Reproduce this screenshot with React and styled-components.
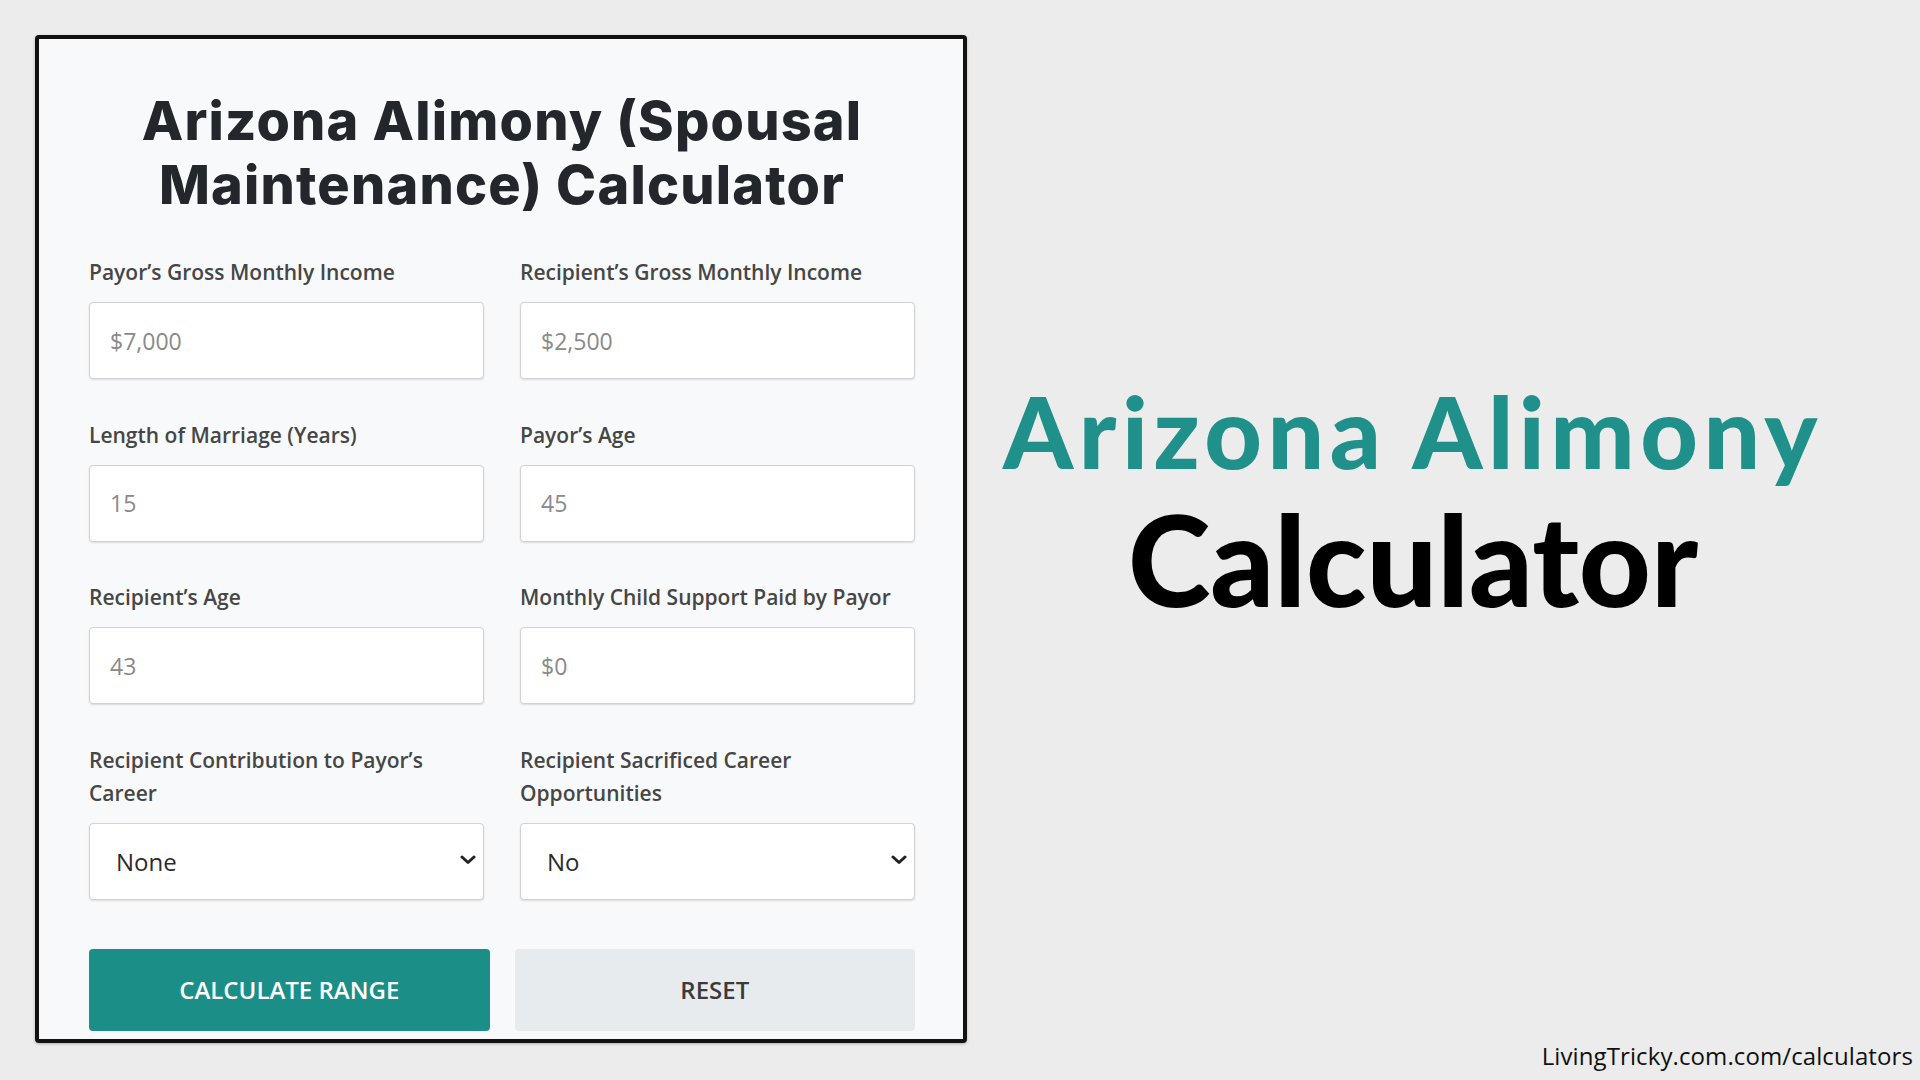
import React from "react";
import styled, { createGlobalStyle } from "styled-components";

const GlobalStyle = createGlobalStyle`
  html, body { margin: 0; padding: 0; }
  body { background: #ececec; font-family: "Open Sans", "Liberation Sans", sans-serif; }
  * { box-sizing: border-box; }
`;

const Page = styled.div`
  width: 1920px;
  height: 1080px;
  display: flex;
  padding: 35px 0 0 35px;
  overflow: hidden;
`;

const Card = styled.div`
  width: 932px;
  flex: none;
  align-self: flex-start;
  background: #f8f9fa;
  border: 4px solid #111;
  border-radius: 4px;
  padding: 50px 48px 8px 50px;
  box-shadow: 0 1px 3px rgba(0,0,0,0.25);
`;

const Title = styled.h1`
  margin: 0 0 39px;
  font-family: "Inter", "Liberation Sans", sans-serif;
  font-weight: 800;
  font-size: 54px;
  line-height: 64px;
  color: #23262b;
  text-align: center;
  letter-spacing: 1.2px;
`;

const FieldGrid = styled.div`
  display: grid;
  grid-template-columns: 1fr 1fr;
  column-gap: 36px;
  row-gap: 39.5px;
  align-items: end;
`;

const Field = styled.div`
  display: flex;
  flex-direction: column;
`;

const Label = styled.label`
  font-family: "Open Sans", "Liberation Sans", sans-serif;
  font-weight: 600;
  font-size: 21px;
  line-height: 33px;
  color: #464646;
  margin-bottom: 13px;
`;

const Input = styled.input`
  height: 77px;
  width: 100%;
  background: #fff;
  border: 1px solid #d2d2d2;
  border-radius: 4px;
  box-shadow: 0 1px 2px rgba(0,0,0,0.12);
  padding: 0 20px;
  font-family: "Open Sans", "Liberation Sans", sans-serif;
  font-size: 23px;
  color: #333;
  outline: none;
  &::placeholder { color: #8a8a8a; }
`;

const SelectWrap = styled.div`
  position: relative;
  height: 77px;
`;

const Select = styled.select`
  appearance: none;
  -webkit-appearance: none;
  height: 100%;
  width: 100%;
  background: #fff;
  border: 1px solid #d2d2d2;
  border-radius: 4px;
  box-shadow: 0 1px 2px rgba(0,0,0,0.12);
  padding: 0 20px 0 26px;
  font-family: "Open Sans", "Liberation Sans", sans-serif;
  font-size: 24px;
  color: #2b2b2b;
  outline: none;
`;

const Chevron = styled.svg`
  position: absolute;
  right: 8px;
  top: 50%;
  width: 16px;
  height: 10px;
  margin-top: -6px;
  pointer-events: none;
`;

const ButtonRow = styled.div`
  display: grid;
  grid-template-columns: 1fr 1fr;
  column-gap: 25px;
  margin-top: 49px;
`;

const Button = styled.button`
  height: 82px;
  border: none;
  border-radius: 4px;
  font-family: "Open Sans", "Liberation Sans", sans-serif;
  font-weight: 600;
  font-size: 24px;
  text-transform: uppercase;
  background: ${(p) => (p.$primary ? "#1b8f87" : "#e8ebee")};
  color: ${(p) => (p.$primary ? "#ffffff" : "#3a3a3a")};
  cursor: pointer;
`;

const Side = styled.div`
  flex: 1;
  display: flex;
  flex-direction: column;
  height: 1045px;
`;

const Hero = styled.div`
  display: flex;
  flex-direction: column;
  align-items: center;
  padding: 340px 61px 0 0;
  font-family: "Lato", "Liberation Sans", sans-serif;
  font-weight: 900;
`;

const HeroLine = styled.div`
  font-size: ${(p) => p.$size}px;
  line-height: ${(p) => p.$lh}px;
  letter-spacing: ${(p) => p.$ls || 0}px;
  margin-top: ${(p) => p.$mt || 0}px;
  color: ${(p) => p.$color};
  white-space: nowrap;
`;

const Footer = styled.div`
  margin-top: auto;
  align-self: flex-end;
  padding: 0 7px 12px 0;
  font-family: "Open Sans", "Liberation Sans", sans-serif;
  font-size: 24px;
  line-height: 24px;
  letter-spacing: 0.1px;
  color: #111;
`;

const ChevronIcon = () => (
  <Chevron viewBox="0 0 16 10">
    <path d="M2 2 L8 7.5 L14 2" fill="none" stroke="#222" strokeWidth="3" strokeLinecap="round" strokeLinejoin="round" />
  </Chevron>
);

const inputs = [
  { label: "Payor’s Gross Monthly Income", ph: "$7,000" },
  { label: "Recipient’s Gross Monthly Income", ph: "$2,500" },
  { label: "Length of Marriage (Years)", ph: "15" },
  { label: "Payor’s Age", ph: "45" },
  { label: "Recipient’s Age", ph: "43" },
  { label: "Monthly Child Support Paid by Payor", ph: "$0" },
];

export default function App() {
  return (
    <>
      <GlobalStyle />
      <Page>
        <Card>
          <Title>
            Arizona Alimony (Spousal
            <br />
            Maintenance) Calculator
          </Title>
          <FieldGrid>
            {inputs.map((f) => (
              <Field key={f.label}>
                <Label>{f.label}</Label>
                <Input placeholder={f.ph} />
              </Field>
            ))}
            <Field>
              <Label>Recipient Contribution to Payor’s Career</Label>
              <SelectWrap>
                <Select defaultValue="None">
                  <option>None</option>
                  <option>Some</option>
                  <option>Significant</option>
                </Select>
                <ChevronIcon />
              </SelectWrap>
            </Field>
            <Field>
              <Label>Recipient Sacrificed Career Opportunities</Label>
              <SelectWrap>
                <Select defaultValue="No">
                  <option>No</option>
                  <option>Yes</option>
                </Select>
                <ChevronIcon />
              </SelectWrap>
            </Field>
          </FieldGrid>
          <ButtonRow>
            <Button $primary>Calculate Range</Button>
            <Button>Reset</Button>
          </ButtonRow>
        </Card>
        <Side>
          <Hero>
            <HeroLine $size={100} $lh={110} $ls={5.5} $color="#1f918a">Arizona Alimony</HeroLine>
            <HeroLine $size={125} $lh={130} $mt={9} $color="#000">Calculator</HeroLine>
          </Hero>
          <Footer>LivingTricky.com.com/calculators</Footer>
        </Side>
      </Page>
    </>
  );
}
